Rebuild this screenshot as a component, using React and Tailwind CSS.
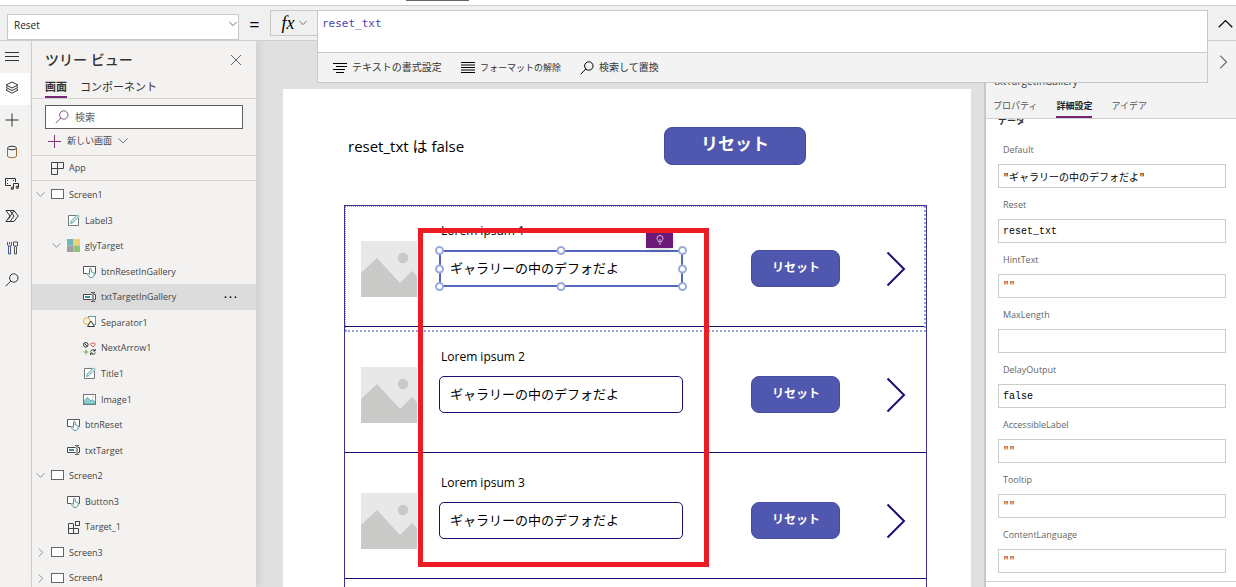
import React, { useState } from "react";

const treeItems = [
  { name: "Screen1", icon: "screen", depth: 0, open: true },
  { name: "Label3", icon: "label", depth: 1 },
  { name: "glyTarget", icon: "gallery", depth: 1, open: true },
  { name: "btnResetInGallery", icon: "button", depth: 2 },
  { name: "txtTargetInGallery", icon: "input", depth: 2 },
  { name: "Separator1", icon: "shape", depth: 2 },
  { name: "NextArrow1", icon: "icons", depth: 2 },
  { name: "Title1", icon: "label", depth: 2 },
  { name: "Image1", icon: "image", depth: 2 },
  { name: "btnReset", icon: "button", depth: 1 },
  { name: "txtTarget", icon: "input", depth: 1 },
  { name: "Screen2", icon: "screen", depth: 0, open: true },
  { name: "Button3", icon: "button", depth: 1 },
  { name: "Target_1", icon: "component", depth: 1 },
  { name: "Screen3", icon: "screen", depth: 0, open: false },
  { name: "Screen4", icon: "screen", depth: 0, open: false },
];

const indents = ["pl-[3px]", "pl-[19px]", "pl-[35px]"];

const initialFields = [
  { name: "Default", value: '"ギャラリーの中のデフォだよ"' },
  { name: "Reset", value: "reset_txt" },
  { name: "HintText", value: '""' },
  { name: "MaxLength", value: "" },
  { name: "DelayOutput", value: "false" },
  { name: "AccessibleLabel", value: '""' },
  { name: "Tooltip", value: '""' },
  { name: "ContentLanguage", value: '""' },
];

const Svg = ({ children, size = 14, className = "", width = 1, box = 14 }) => (
  <svg
    width={size}
    height={size}
    viewBox={`0 0 ${box} ${box}`}
    fill="none"
    stroke="currentColor"
    strokeWidth={width}
    className={`shrink-0 ${className}`}
    aria-hidden="true"
  >
    {children}
  </svg>
);

const Chevron = ({ dir = "down", className = "", size = 10, width = 1 }) => (
  <Svg size={size} box={10} className={className} width={width}>
    {dir === "down" && <path d="M0.5 2.5 5 7l4.5-4.5" />}
    {dir === "up" && <path d="M0.5 7.5 5 3l4.5 4.5" />}
    {dir === "right" && <path d="M3 0.5 7.5 5 3 9.5" />}
  </Svg>
);

const SearchIcon = ({ className = "", size = 14 }) => (
  <Svg className={className} size={size}>
    <circle cx="8.8" cy="5" r="4.2" />
    <path d="M5.8 8 0.7 13.2" />
  </Svg>
);

const TreeIcon = ({ type }) => {
  switch (type) {
    case "screen":
      return (
        <Svg size={13} box={13} className="text-[#666]">
          <rect x="0.5" y="1.5" width="12" height="9" fill="#fff" />
        </Svg>
      );
    case "label":
      return (
        <Svg size={13} box={13} className="text-[#777]">
          <path d="M9 1.5H1.5v10h10V4" fill="#fff" />
          <path d="M3.5 9.5 4.3 7 10.5 0.8 12 2.3 5.9 8.6z" stroke="#3d9396" fill="#d4eeee" strokeWidth="0.8" />
        </Svg>
      );
    case "gallery":
      return (
        <Svg size={13} box={13}>
          <rect width="6.500" height="6.500" fill="#6fb7bb" stroke="none" />
          <rect x="6.500" width="6.500" height="6.500" fill="#f0cf7c" stroke="none" />
          <rect y="6.500" width="6.500" height="6.500" fill="#a0a0a0" stroke="none" />
          <rect x="6.500" y="6.500" width="6.500" height="6.500" fill="#93c47d" stroke="none" />
        </Svg>
      );
    case "button":
      return (
        <Svg size={13} box={13} className="text-[#555]">
          <path d="M4 8.5H0.5v-7h12v7H11" fill="#fff" />
          <path
            d="M6.5 8.5V4.2a0.8 0.8 0 0 1 1.7 0v2.6l2.4 0.7c0.7 0.2 0.9 0.8 0.7 1.6-0.4 2-1.2 3.4-3 3.4-2 0-2.8-1.3-3.7-3.3-0.3-0.8 0.8-1.5 1.9 0.3z"
            stroke="#3d9396"
            fill="#fff"
          />
        </Svg>
      );
    case "input":
      return (
        <Svg size={13} box={13} className="text-[#444]">
          <path d="M8.5 3.5h-8v5h8M11 3.5h1.5v5H11" fill="#fff" />
          <path d="M2 6h5" stroke="#3d9396" strokeWidth="2" />
          <path d="M8 1.5h1.5l0.5 0.5 0.5-0.5H12M8 10.5h1.5l0.5-0.5 0.5 0.5H12M10 2v8" />
        </Svg>
      );
    case "shape":
      return (
        <Svg size={13} box={13} className="text-[#555]">
          <rect x="5.5" y="0.5" width="7" height="8" stroke="#5f9ea0" fill="#fff" />
          <circle cx="3.8" cy="5" r="3.3" stroke="#e0b13c" fill="#fff6df" />
          <path d="M8 5 4.5 10.5h7z" stroke="#333" fill="#fff" />
        </Svg>
      );
    case "icons":
      return (
        <Svg size={13} box={13} className="text-[#333]">
          <circle cx="2.8" cy="2.8" r="2.3" />
          <path d="M1.2 1.2 4.4 4.4" />
          <path d="M10 5 7.8 2.8c-0.6-1.5 1.4-2.6 2.2-1.1 0.8-1.5 2.8-0.4 2.2 1.1z" stroke="#d9534f" />
          <path d="M3 7.5v5M0.5 10h5" stroke="#6aa84f" />
          <path d="M7.6 9.6c0.4-2 3-2.4 4.2-1M12.2 7v2h-2M12.4 10.6c-0.6 1.9-3 2.2-4.2 0.9M7.6 13v-2h2" />
        </Svg>
      );
    case "image":
      return (
        <Svg size={13} box={13} className="text-[#777]">
          <rect x="0.5" y="1.5" width="12" height="10" fill="#fff" />
          <path d="M1 8.5 4.2 4.5 8 8l1.5-1.5L12 9v2H1z" fill="#8fcfcf" stroke="#3d9396" strokeWidth="0.7" />
          <circle cx="10" cy="4" r="0.8" fill="#e8a33d" stroke="none" />
        </Svg>
      );
    case "component":
      return (
        <Svg size={13} box={13} className="text-[#444]">
          <path d="M6 2.5H1.5v10h10V7.5M1.5 7.5h10M6.5 2.5v10" />
          <rect x="8.5" y="0.5" width="4" height="4" />
        </Svg>
      );
    default:
      return null;
  }
};

const railIcons = [
  {
    label: "メニュー",
    draw: <path d="M0 3.5h14M0 7.500h14M0 11.500h14" />,
  },
  {
    label: "ツリー ビュー",
    draw: (
      <>
        <path d="M7 1 13 4 7 7 1 4z" />
        <path d="M2.5 5.5 1 6.5l6 3 6-3-1.5-1M2.5 8 1 9l6 3.2L13 9l-1.5-1" />
      </>
    ),
  },
  { label: "挿入", draw: <path d="M7 0.5v13M0.5 7h13" /> },
  {
    label: "データ",
    draw: (
      <>
        <ellipse cx="7" cy="3" rx="4.5" ry="1.8" />
        <path d="M2.5 3v8c0 2.2 9 2.2 9 0V3" stroke="#a06a35" />
      </>
    ),
  },
  {
    label: "メディア",
    draw: (
      <>
        <path d="M6 8.5H0.5v-7h10V5M2 3.5h1M2 6.5h1M8 3.5h1" />
        <path d="M8.5 11V6.5h5V10" />
        <circle cx="7.3" cy="11.3" r="1.2" fill="#b58240" />
        <circle cx="12.3" cy="10.3" r="1.2" fill="#b58240" />
      </>
    ),
  },
  {
    label: "Power Automate",
    draw: (
      <>
        <path d="M1 1.5h8L13.2 7 9 12.5H1L5 7z" />
        <path d="M5 1.5 9 7l-4 5.5M9 1.5 3 10.5" />
      </>
    ),
  },
  {
    label: "詳細ツール",
    draw: (
      <>
        <path d="M3.500 5v8h2V5M2.500 1v3l1 1h2l1-1V1M4.500 1v2.500" stroke="#4a5a8c" />
        <path d="M9.500 6v7h2V6M8.500 1v4h4V1zM10.500 5v1" stroke="#555" />
      </>
    ),
  },
  {
    label: "検索",
    draw: (
      <>
        <circle cx="8.8" cy="5" r="4.2" />
        <path d="M5.8 8 0.7 13.2" />
      </>
    ),
  },
];

const FormulaBar = ({ formula, setFormula }) => {
  return (
    <header className="relative z-20 flex h-[36px] shrink-0 border-y border-[#cfcfcf] bg-[#f0f0f0]">
      <div className="relative mt-[5px] ml-[7px] h-[26px] w-[232px] shrink-0">
        <select
          aria-label="プロパティ"
          className="h-full w-full appearance-none border border-[#c8c8c8] bg-white px-1.5 pb-0.5 text-[10px] text-[#222]"
        >
          <option>Reset</option>
          <option>Default</option>
        </select>
        <Chevron size={8} className="pointer-events-none absolute top-[9px] right-[2px] text-[#444]" />
      </div>
      <span className="mt-[5px] w-[31px] shrink-0 text-center text-lg leading-[26px] text-black">=</span>
      <button
        aria-label="fx"
        className="mt-1 flex h-[26px] w-[47px] shrink-0 items-center justify-center gap-1 border border-r-0 border-[#c8c8c8]"
      >
        <span className="font-['Liberation_Serif',serif] text-lg leading-none text-black italic">fx</span>
        <Chevron size={8} className="text-[#555]" />
      </button>
      <div className="relative min-w-0 flex-1">
        <div className="absolute inset-x-0 top-1 border border-[#c8c8c8] bg-[#f3f3f3]">
          <textarea
            aria-label="数式"
            value={formula}
            onChange={(e) => setFormula(e.target.value)}
            className="block h-[41px] w-full resize-none bg-white px-1 py-[5px] font-['DejaVu_Sans_Mono',monospace] text-[11px] leading-4 text-[#4b3fb0] outline-none"
          />
          <div className="flex h-[30px] items-center border-t border-[#c8c8c8] pl-[15px] text-[#333]">
            <button className="flex w-[128px] items-center gap-[5px] text-[10px] whitespace-nowrap">
              <Svg className="text-black">
                <path d="M0 2.5h14M3 5.5h11M0 8.5h12M3 11.5h8" />
              </Svg>
              テキストの書式設定
            </button>
            <button className="flex w-[119px] items-center gap-[5px] text-[9px] whitespace-nowrap">
              <Svg className="text-black">
                <path d="M0 1.5h14M0 4h14M0 6.5h14M0 9h14M0 11.5h14" />
              </Svg>
              フォーマットの解除
            </button>
            <button className="flex items-center gap-[5px] text-[10px] whitespace-nowrap">
              <SearchIcon className="text-black" />
              検索して置換
            </button>
          </div>
        </div>
      </div>
      <button aria-label="数式バーを折りたたむ" className="flex w-[28px] shrink-0 items-center justify-center pl-1.5">
        <Chevron dir="up" size={15} width={0.8} className="text-black" />
      </button>
    </header>
  );
};

const Rail = () => (
  <nav className="flex w-8 shrink-0 flex-col border-r border-[#d2d2d2] bg-[#f3f2f1]">
    {railIcons.map((item, i) => (
      <button
        key={item.label}
        aria-label={item.label}
        className={`flex h-8 w-[30px] items-center pb-0.5 pl-[5px] text-[#333] ${i === 1 ? "bg-white" : ""}`}
      >
        <Svg>{item.draw}</Svg>
      </button>
    ))}
  </nav>
);

const TreeView = () => {
  const [selected, setSelected] = useState("txtTargetInGallery");

  return (
    <aside className="z-10 flex w-[224px] shrink-0 flex-col bg-[#f3f2f1] shadow-[2px_0_8px_rgba(0,0,0,0.1)]">
      <div className="flex h-[36px] shrink-0 items-center justify-between pt-0.5 pr-3.5 pl-[13px]">
        <h2 className="text-sm font-medium text-[#323130]">ツリー ビュー</h2>
        <button aria-label="閉じる">
          <Svg size={12} box={12} className="text-[#666]">
            <path d="M1 1l10 10M11 1 1 11" />
          </Svg>
        </button>
      </div>
      <div className="flex h-[22px] shrink-0 items-stretch gap-[13px] border-b border-[#d2d0ce] pl-[13px] text-[11px] text-[#323130]">
        <button className="border-b-2 border-[#742774] pt-0.5 font-bold">画面</button>
        <button className="border-b-2 border-transparent pt-0.5">コンポーネント</button>
      </div>
      <div className="mt-1.5 mr-[13px] ml-[13px] flex h-[24px] shrink-0 items-center gap-1.5 border border-[#605e5c] bg-white pl-[9px]">
        <SearchIcon className="text-[#8a4a8a]" />
        <input
          type="search"
          aria-label="検索"
          placeholder="検索"
          className="min-w-0 flex-1 bg-transparent text-[10px] outline-none placeholder:text-[#605e5c]"
        />
      </div>
      <button className="flex h-[27px] shrink-0 items-center gap-1.5 border-b border-[#d2d0ce] pb-0.5 pl-4 text-[9px] text-[#444]">
        <Svg size={13} className="text-[#742774]">
          <path d="M7 0v14M0 7h14" />
        </Svg>
        新しい画面
        <Chevron className="text-[#777]" />
      </button>
      <button className="flex h-[25px] shrink-0 items-center gap-[5px] border-b border-[#d2d0ce] pl-[19px] text-[9px] text-[#444]">
        <Svg size={13} box={13} className="text-[#444]">
          <path d="M6.500 12.500h-6V0.500h12v6h-12M6.500 0.500v12" />
        </Svg>
        App
      </button>
      <ul className="mt-px grid h-[409px] shrink-0 auto-rows-fr text-[9px] text-[#444]">
        {treeItems.map((item) => (
          <li
            key={item.name}
            className={`flex items-center pr-[19px] ${indents[item.depth]} ${
              selected === item.name ? "bg-[#dcdcdc]" : ""
            }`}
          >
            <span className="flex w-4 shrink-0 items-center pl-px">
              {item.open !== undefined && (
                <Chevron size={9} dir={item.open ? "down" : "right"} className="text-[#888]" />
              )}
            </span>
            <button className="flex flex-1 items-center gap-[5px]" onClick={() => setSelected(item.name)}>
              <TreeIcon type={item.icon} />
              {item.name}
            </button>
            {selected === item.name && (
              <button aria-label="その他">
                <svg width="13" height="3" viewBox="0 0 13 3" fill="#111" aria-hidden="true">
                  <circle cx="1.5" cy="1.2" r="0.9" />
                  <circle cx="6.5" cy="1.2" r="0.9" />
                  <circle cx="11.5" cy="1.2" r="0.9" />
                </svg>
              </button>
            )}
          </li>
        ))}
      </ul>
    </aside>
  );
};

const Placeholder = () => (
  <svg width="56" height="56" viewBox="0 0 56 56" className="mt-[35px] shrink-0" aria-hidden="true">
    <rect width="56" height="56" fill="#e8e8e8" />
    <path d="M0 32 16 17 39 42 51 30 56 35V56H0z" fill="#c9c9c8" />
    <circle cx="42" cy="17" r="5.3" fill="#c9c9c8" />
  </svg>
);

const Handle = ({ className }) => (
  <span className={`absolute h-[9px] w-[9px] rounded-full border-2 border-[#98a9e0] bg-white ${className}`} />
);

const GalleryRow = ({ title, selected }) => {
  const [text, setText] = useState("ギャラリーの中のデフォだよ");

  return (
    <li className="relative h-[126px]">
      {selected && (
        <div className="pointer-events-none absolute inset-0 border-2 border-t border-l border-dotted border-[#8fa3e0]" />
      )}
      <div className="flex h-[121px] items-start border-b border-[#1b0f73] pr-5 pl-4">
        <Placeholder />
        <div className="ml-[22px] w-[244px] shrink-0 pt-[15px]">
          <label htmlFor={title} className="ml-0.5 block text-xs leading-5 font-medium text-black">
            {title}
          </label>
          <div className="relative mt-[9px]">
            <input
              id={title}
              value={text}
              onChange={(e) => setText(e.target.value)}
              className={`block h-[37px] w-full bg-white pb-0.5 text-[13px] text-black outline-none ${
                selected ? "border-2 border-[#5368bd] px-[9px]" : "rounded-[5px] border border-[#1b0f73] px-2.5"
              }`}
            />
            {selected && (
              <>
                <span className="absolute right-[10px] bottom-[39px] flex h-[18px] w-[27px] items-end justify-center bg-[#6b1a78] pb-[3px] shadow-md">
                  <svg width="8" height="10" viewBox="0 0 8 10" fill="none" stroke="#d9b8de" aria-hidden="true">
                    <path d="M2.5 7C2.5 5.5 1 5 1 3.5a3 3 0 0 1 6 0C7 5 5.500 5.500 5.500 7zM3 9h2M4 7V4" />
                  </svg>
                </span>
                <Handle className="-top-1 -left-1" />
                <Handle className="-top-1 left-1/2 -translate-x-1/2" />
                <Handle className="-top-1 -right-1" />
                <Handle className="top-1/2 -left-1 -translate-y-1/2" />
                <Handle className="top-1/2 -right-1 -translate-y-1/2" />
                <Handle className="-bottom-1 -left-1" />
                <Handle className="-bottom-1 left-1/2 -translate-x-1/2" />
                <Handle className="-right-1 -bottom-1" />
              </>
            )}
          </div>
        </div>
        <span className="flex-[3]" />
        <button
          className="mt-[44px] h-[37px] w-[89px] shrink-0 rounded-[8px] border border-[#454da0] bg-[#4f58ae] pb-0.5 text-xs font-bold text-white"
          onClick={() => setText("ギャラリーの中のデフォだよ")}
        >
          リセット
        </button>
        <span className="flex-[2]" />
        <button aria-label="次へ" className="mt-[45px]">
          <svg width="20" height="36" viewBox="0 0 20 36" fill="none" stroke="#1b0f73" strokeWidth="2" aria-hidden="true">
            <path d="M1.500 1.500 18 18 1.500 34.500" />
          </svg>
        </button>
      </div>
    </li>
  );
};

const Canvas = ({ formula }) => (
  <main className="flex min-w-0 flex-1 flex-col overflow-hidden bg-[#e0e0e0] pt-[48px] pr-[13px] pl-[27px]">
    <div className="flex-1 bg-white pt-[38px] pr-[44px] pl-[61px]">
      <div className="flex items-center justify-between pr-[121px] pl-1">
        <p className="text-[15px] text-black">{formula} は false</p>
        <button className="h-[38px] w-[142px] rounded-[8px] border border-[#454da0] bg-[#4f58ae] pb-1 text-[17px] font-bold text-white">
          リセット
        </button>
      </div>
      <div className="relative mt-[40px]">
        <ul className="border border-[#3c3190]">
          <GalleryRow title="Lorem ipsum 1" selected />
          <GalleryRow title="Lorem ipsum 2" />
          <GalleryRow title="Lorem ipsum 3" />
          <li className="h-[126px]" />
        </ul>
        {/* highlight frame drawn over the text boxes */}
        <div className="pointer-events-none absolute top-[23px] left-[74px] h-[339px] w-[291px] border-[5px] border-[#ed1c24]" />
      </div>
    </div>
  </main>
);

const PropertyPanel = () => {
  const [fields, setFields] = useState(initialFields);

  const handleChange = (name, value) => {
    setFields((prev) => prev.map((f) => (f.name === name ? { ...f, value } : f)));
  };

  return (
    <aside className="flex w-[252px] shrink-0 flex-col overflow-hidden border-l-2 border-[#c8c8c8] bg-white">
      <div className="flex h-[78px] shrink-0 flex-col border-b border-[#cfcfcf] bg-[#f3f3f3]">
        <button aria-label="パネルを閉じる" className="mt-3.5 mr-[6px] self-end">
          <Chevron dir="right" size={14} width={0.8} className="text-[#666]" />
        </button>
        <h2 className="mt-1 ml-2 text-[10px] leading-4 text-[#333]">txtTargetInGallery</h2>
        <div className="flex flex-1 items-stretch gap-[19px] pt-1.5 pl-[7px] text-[9px] text-[#555]">
          <button className="border-b-2 border-transparent">プロパティ</button>
          <button className="border-b-2 border-[#742774] font-bold text-[#222]">詳細設定</button>
          <button className="border-b-2 border-transparent">アイデア</button>
        </div>
      </div>
      <div className="flex min-h-0 flex-1 flex-col overflow-hidden">
        <h3 className="-mt-1 h-3 shrink-0 pl-3 text-[9px] leading-3 font-bold text-[#333]">データ</h3>
        <div className="flex shrink-0 flex-col gap-2 border-b border-[#cfcfcf] pt-3.5 pr-2.5 pb-2 pl-3">
          {fields.map((field) => (
            <div key={field.name}>
              <label htmlFor={field.name} className="mb-[5px] block pl-[5px] text-[9px] leading-[18px] text-[#666]">
                {field.name}
              </label>
              <input
                id={field.name}
                value={field.value}
                onChange={(e) => handleChange(field.name, e.target.value)}
                className={`block h-[24px] w-full border border-[#cccccc] px-1 font-['Liberation_Mono','Noto_Sans_CJK_JP',monospace] text-[10px] leading-5 outline-none ${
                  field.value === '""' ? "text-[#7a0f2c]" : "text-black"
                }`}
              />
            </div>
          ))}
        </div>
      </div>
    </aside>
  );
};

const App = () => {
  const [formula, setFormula] = useState("reset_txt");

  return (
    <div className="flex h-screen flex-col overflow-hidden bg-white font-['Open_Sans','Noto_Sans_CJK_JP',sans-serif]">
      <div className="h-[5px] shrink-0 bg-white">
        <div className="ml-[406px] h-px w-[63px] bg-[#666]" />
      </div>
      <FormulaBar formula={formula} setFormula={setFormula} />
      <div className="flex min-h-0 flex-1">
        <Rail />
        <TreeView />
        <Canvas formula={formula} />
        <PropertyPanel />
      </div>
    </div>
  );
};

export default App;
